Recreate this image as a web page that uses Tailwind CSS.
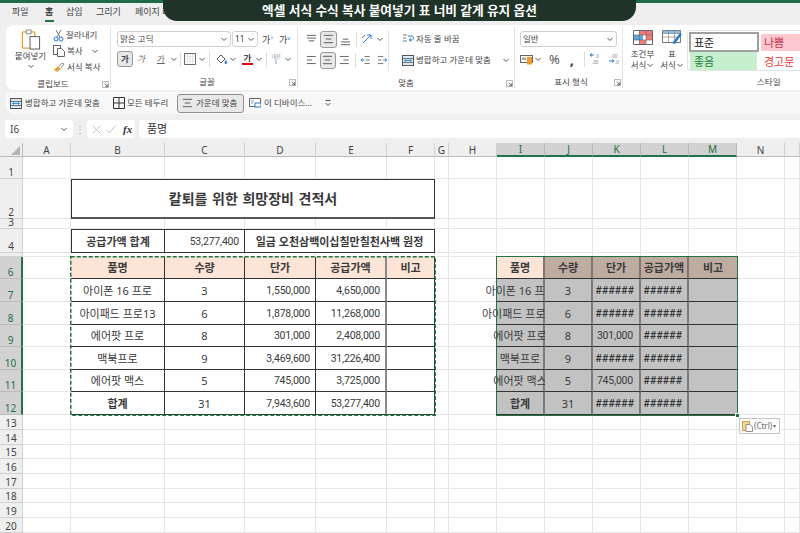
<!DOCTYPE html>
<html lang="ko">
<head>
<meta charset="UTF-8">
<title>엑셀 서식 수식 복사</title>
<script src="https://cdn.jsdelivr.net/npm/@tailwindcss/browser@4"></script>
</head>
<body class="w-[800px] h-[533px] overflow-hidden bg-[#efefef] text-[#444] text-[8.5px] [font-family:'Noto_Sans','Noto_Sans_CJK_KR',sans-serif]">

<!-- shared icons -->
<svg class="hidden">
  <symbol id="chev" viewBox="0 0 8 8"><path d="M1.500 3 4 5.500 6.500 3" fill="none" stroke="#555" stroke-width="1"/></symbol>
  <symbol id="launch" viewBox="0 0 8 8"><path d="M.5.500h7v7h-7z" fill="none" stroke="#999" stroke-width=".8"/><path d="M3 3l3.500 3.500M6.500 3.500v3h-3" fill="none" stroke="#555" stroke-width=".9"/></symbol>
  <symbol id="merge" viewBox="0 0 12 11"><rect x=".5" y=".5" width="11" height="10" fill="#d7ebf8" stroke="#555"/><path d="M.5 3.500h11M.5 7.500h11" stroke="#555" stroke-width=".8"/><path d="M2.500 5.500h7M2.500 5.500l1.500-1M2.500 5.500l1.500 1M9.500 5.500l-1.500-1M9.500 5.500l-1.500 1" stroke="#1e7fc9" stroke-width=".8" fill="none"/></symbol>
  <symbol id="center" viewBox="0 0 12 10"><path d="M1 1h10M3 5h6M1 9h10" stroke="#555" stroke-width="1"/></symbol>
</svg>

<!-- title bar -->
<header class="relative h-[25px] border-t-[3px] border-[#1f6b46]">
  <nav class="flex items-center h-[18px] text-[9px] text-[#444] whitespace-nowrap">
    <span class="ml-[12px] w-[33px]">파일</span>
    <span class="w-[21px] font-bold relative">홈<i class="absolute left-0 top-[15px] w-[9px] h-[2px] bg-[#217346]"></i></span>
    <span class="w-[30px]">삽입</span>
    <span class="w-[39px]">그리기</span>
    <span>페이지 레이아웃</span>
  </nav>
  <div class="absolute left-[163px] -top-[3px] w-[473px] h-[21px] bg-[#1f3328] rounded-b-[14px] flex items-center justify-center text-white font-bold text-[12.7px] leading-none">엑셀 서식 수식 복사 붙여넣기 표 너비 같게 유지 옵션</div>
</header>

<!-- ribbon -->
<section class="ml-[6px] h-[65px] bg-white rounded-l-lg flex">

  <!-- clipboard -->
  <div class="w-[105px] shrink-0 border-r border-[#e3e3e3] my-[2px] flex flex-col">
    <div class="flex h-[48px]">
      <div class="w-[47px] shrink-0 flex flex-col items-center pt-[2px] pl-[2px]">
        <svg class="w-[20px] h-[21px]" viewBox="0 0 20 22"><rect x="1" y="3" width="13" height="17" rx="1" fill="#fff" stroke="#e8a33d" stroke-width="1.400"/><rect x="5" y="1" width="5" height="4" fill="#fff" stroke="#888"/><rect x="9" y="8" width="10" height="13" fill="#fff" stroke="#555"/></svg>
        <span class="leading-[12px] whitespace-nowrap">붙여넣기</span>
        <svg class="w-[8px] h-[8px]"><use href="#chev"/></svg>
      </div>
      <div class="flex flex-col text-[#444] leading-none">
        <div class="h-[17px] flex items-center gap-[2px]">
          <svg class="w-[11px] h-[13px]" viewBox="0 0 11 13"><path d="M3 1l4 7M8 1 4 8" stroke="#777" stroke-width="1" fill="none"/><circle cx="3" cy="10" r="2" fill="none" stroke="#2b7cd3"/><circle cx="8" cy="10" r="2" fill="none" stroke="#2b7cd3"/></svg>
          <span>잘라내기</span>
        </div>
        <div class="h-[17px] flex items-center gap-[2px]">
          <svg class="w-[12px] h-[12px]" viewBox="0 0 12 12"><rect x=".5" y=".5" width="7" height="9" fill="#fff" stroke="#666"/><path d="M4.500 3.500h4l3 3v5h-7z" fill="#fff" stroke="#666"/></svg>
          <span class="w-[22px]">복사</span>
          <svg class="w-[8px] h-[8px]"><use href="#chev"/></svg>
        </div>
        <div class="h-[17px] flex items-center gap-[2px]">
          <svg class="w-[12px] h-[12px]" viewBox="0 0 12 12"><path d="M1 9l4-4 3 3-4 3z" fill="#e8a33d"/><path d="M6 5l3-3 2 1-3 4" fill="#fff" stroke="#777" stroke-width=".8"/></svg>
          <span>서식 복사</span>
        </div>
      </div>
    </div>
    <div class="flex items-center justify-center relative h-[12px] pr-[10px] mt-[3px]">클립보드<svg class="absolute right-[1px] top-[3px] w-[7px] h-[7px]"><use href="#launch"/></svg></div>
  </div>

  <!-- font -->
  <div class="w-[187px] shrink-0 border-r border-[#e3e3e3] my-[2px] flex flex-col pl-[6px]">
    <div class="flex items-center h-[19px] mt-[3px]">
      <div class="w-[114px] h-[16px] border border-[#d0d0d0] rounded-[3px] flex items-center justify-between px-[2px]"><span>맑은 고딕</span><svg class="w-[8px] h-[8px]"><use href="#chev"/></svg></div>
      <div class="ml-[1px] w-[26px] h-[16px] border border-[#d0d0d0] rounded-[3px] flex items-center justify-between px-[2px]"><span>11</span><svg class="w-[8px] h-[8px]"><use href="#chev"/></svg></div>
      <span class="ml-[4px] w-[17px] text-[9px] leading-none whitespace-nowrap">가<span class="text-[#2b7cd3] text-[6px] align-top">^</span></span>
      <span class="text-[9px] leading-none whitespace-nowrap">가<span class="text-[#2b7cd3] text-[6px] align-top">v</span></span>
    </div>
    <div class="flex items-center h-[18px] mt-[2px]">
      <div class="w-[16px] h-[16px] bg-[#e8e8e8] border border-[#999] rounded-[3px] flex items-center justify-center font-bold">가</div>
      <span class="ml-[4px] w-[20px] italic text-[#666]">가</span>
      <span class="w-[13px] underline text-[#666]">가</span>
      <svg class="w-[8px] h-[8px]"><use href="#chev"/></svg>
      <i class="ml-[2px] w-px h-[15px] bg-[#ddd]"></i>
      <svg class="ml-[3px] w-[12px] h-[12px]" viewBox="0 0 12 12"><path d="M.5.500h11v11H.5z" fill="none" stroke="#666"/><path d="M6 .5v11M.5 6h11M3.500.5v11M8.500.5v11M.5 3.500h11M.5 8.500h11" stroke="#aaa" stroke-width=".5" stroke-dasharray="1 1"/></svg>
      <svg class="ml-[2px] w-[8px] h-[8px]"><use href="#chev"/></svg>
      <i class="ml-[3px] w-px h-[15px] bg-[#ddd]"></i>
      <svg class="ml-[6px] w-[12px] h-[12px]" viewBox="0 0 12 12"><path d="M1 6l4-4 4 4-4 4z" fill="#fff" stroke="#555"/><path d="M9.500 7c1 1.300 1.500 2 1.500 2.700a1.200 1.200 0 0 1-2.400 0c0-.7.4-1.400.9-2.700z" fill="#2b7cd3"/></svg>
      <svg class="ml-[1px] w-[8px] h-[8px]"><use href="#chev"/></svg>
      <div class="ml-[5px] w-[11px] flex flex-col items-center leading-[10px] font-bold"><span>가</span><i class="w-[11px] h-[2px] bg-[#e60012]"></i></div>
      <svg class="ml-[2px] w-[8px] h-[8px]"><use href="#chev"/></svg>
      <i class="ml-[3px] w-px h-[15px] bg-[#ddd]"></i>
      <div class="ml-[3px] w-[12px] flex flex-col items-center leading-[6px] text-[5px] text-[#888] whitespace-nowrap"><span>내천</span><span class="text-[#2b7cd3] text-[7px]">i</span></div>
      <svg class="ml-[2px] w-[8px] h-[8px]"><use href="#chev"/></svg>
    </div>
    <div class="flex items-center justify-center relative h-[12px] mt-[8px]">글꼴<svg class="absolute right-[1px] top-[3px] w-[7px] h-[7px]"><use href="#launch"/></svg></div>
  </div>

  <!-- alignment -->
  <div class="w-[217px] shrink-0 border-r border-[#e3e3e3] my-[2px] flex flex-col">
    <div class="flex h-[48px]">
      <div class="w-[91px] shrink-0 pl-[8px] border-r border-[#e3e3e3] my-[3px] h-[41px]">
        <div class="flex items-center h-[18px] gap-[3px]">
          <svg class="w-[11px] h-[10px]" viewBox="0 0 12 10"><path d="M1 1h10M1 4h10M3 7h6" stroke="#555"/></svg>
          <div class="w-[17px] h-[17px] bg-[#e8e8e8] border border-[#999] rounded-[3px] flex items-center justify-center"><svg class="w-[11px] h-[10px]"><use href="#center"/></svg></div>
          <svg class="w-[11px] h-[10px] mt-[3px]" viewBox="0 0 12 10"><path d="M3 3h6M1 6h10M1 9h10" stroke="#555"/></svg>
          <i class="ml-[2px] w-px h-[15px] bg-[#ddd]"></i>
          <svg class="ml-[1px] w-[12px] h-[12px]" viewBox="0 0 12 12"><path d="M2 10 10 2M6 2h4v4" fill="none" stroke="#2b7cd3"/><path d="M1 5l3-3" stroke="#777"/></svg>
          <svg class="w-[8px] h-[8px]"><use href="#chev"/></svg>
        </div>
        <div class="flex items-center h-[18px] gap-[3px] mt-[3px]">
          <svg class="w-[11px] h-[10px]" viewBox="0 0 12 10"><path d="M1 1h10M1 5h6M1 9h10" stroke="#555"/></svg>
          <div class="w-[17px] h-[17px] bg-[#e8e8e8] border border-[#999] rounded-[3px] flex items-center justify-center"><svg class="w-[11px] h-[10px]"><use href="#center"/></svg></div>
          <svg class="w-[11px] h-[10px]" viewBox="0 0 12 10"><path d="M1 1h10M5 5h6M1 9h10" stroke="#555"/></svg>
          <i class="ml-[2px] w-px h-[15px] bg-[#ddd]"></i>
          <svg class="ml-[1px] w-[11px] h-[10px]" viewBox="0 0 12 10"><path d="M5 1h6M7 5h4M5 9h6" stroke="#666"/><path d="M5 5H1M1 5l2-2M1 5l2 2" stroke="#2b7cd3" fill="none"/></svg>
          <svg class="ml-[4px] w-[11px] h-[10px]" viewBox="0 0 12 10"><path d="M1 1h6M1 5h4M1 9h6" stroke="#666"/><path d="M7 5h4M11 5 9 3M11 5 9 7" stroke="#2b7cd3" fill="none"/></svg>
        </div>
      </div>
      <div class="pl-[13px] pt-[3px] leading-none">
        <div class="flex items-center h-[18px] gap-[2px]">
          <svg class="w-[12px] h-[12px]" viewBox="0 0 12 12"><path d="M1 2h4M1 5h3M1 8h4" stroke="#777"/><path d="M6 3h4c2 0 2 4 0 4H7M7 7l2-1.500M7 7l2 1.500" stroke="#2b7cd3" fill="none"/></svg>
          <span>자동 줄 바꿈</span>
        </div>
        <div class="flex items-center h-[18px] gap-[2px] mt-[3px]">
          <svg class="w-[12px] h-[11px]"><use href="#merge"/></svg>
          <span class="w-[84px] whitespace-nowrap">병합하고 가운데 맞춤</span>
          <svg class="w-[8px] h-[8px]"><use href="#chev"/></svg>
        </div>
      </div>
    </div>
    <div class="flex items-center justify-center relative h-[12px] mt-[3px]">맞춤<svg class="absolute right-[1px] top-[3px] w-[7px] h-[7px]"><use href="#launch"/></svg></div>
  </div>

  <!-- number -->
  <div class="w-[108px] shrink-0 border-r border-[#e3e3e3] my-[2px] flex flex-col pl-[5px]">
    <div class="flex items-center h-[19px] mt-[3px]">
      <div class="w-[97px] h-[16px] border border-[#d0d0d0] rounded-[3px] flex items-center justify-between px-[2px]"><span>일반</span><svg class="w-[8px] h-[8px]"><use href="#chev"/></svg></div>
    </div>
    <div class="flex items-center h-[18px] mt-[2px]">
      <svg class="w-[13px] h-[12px]" viewBox="0 0 13 12"><rect x=".5" y="2.500" width="12" height="7" fill="#fff" stroke="#666"/><path d="M3 4v3M5 4v3M1.500 6h5" stroke="#666" stroke-width=".7"/><rect x="7" y="4" width="5" height="7.500" fill="#f09a2c"/></svg>
      <svg class="ml-[1px] w-[8px] h-[8px]"><use href="#chev"/></svg>
      <span class="ml-[7px] text-[13px] text-[#555] leading-none">%</span>
      <span class="ml-[10px] w-[6px] text-[15px] font-bold text-[#444] leading-none">,</span>
      <i class="ml-[8px] w-px h-[15px] bg-[#ddd]"></i>
      <svg class="ml-[4px] w-[12px] h-[12px]" viewBox="0 0 12 12"><path d="M5 2H1M1 2l2-1.500M1 2l2 1.500" stroke="#2b7cd3" fill="none"/><text x="6" y="5" font-size="4.500" fill="#777">.0</text><text x="3" y="11" font-size="4.500" fill="#777">.00</text></svg>
      <svg class="ml-[7px] w-[12px] h-[12px]" viewBox="0 0 12 12"><text x="3" y="5" font-size="4.500" fill="#777">.00</text><path d="M1 8h5M6 8 4 6.500M6 8 4 9.500" stroke="#2b7cd3" fill="none"/><text x="7" y="11" font-size="4.500" fill="#777">.0</text></svg>
    </div>
    <div class="flex items-center justify-center relative h-[12px] mt-[8px]">표시 형식<svg class="absolute right-[1px] top-[3px] w-[7px] h-[7px]"><use href="#launch"/></svg></div>
  </div>

  <!-- styles -->
  <div class="flex-1 min-w-0 my-[2px] flex flex-col">
    <div class="flex h-[48px]">
      <div class="w-[33px] shrink-0 ml-[3px] flex flex-col items-center pt-[3px] leading-[11px] whitespace-nowrap">
        <svg class="w-[20px] h-[15px] mb-[3px]" viewBox="0 0 20 15"><path d="M.5.500h19v14H.5z" fill="#fff" stroke="#666"/><rect x="6" y="1" width="13" height="4" fill="#f47a7a"/><rect x="1" y="5" width="9" height="5" fill="#5ba7e0"/><rect x="13" y="5" width="6" height="5" fill="#f47a7a"/><rect x="6" y="10" width="7" height="4" fill="#f47a7a"/><path d="M6.500 0v15M13 0v15M0 5h20M0 10h20" stroke="#666" stroke-width=".6"/></svg>
        <span>조건부</span>
        <span class="flex items-center">서식<svg class="w-[8px] h-[8px]"><use href="#chev"/></svg></span>
      </div>
      <div class="w-[26px] shrink-0 flex flex-col items-center pt-[2px] leading-[11px] whitespace-nowrap">
        <svg class="w-[21px] h-[16px] mb-[3px]" viewBox="0 0 21 16"><path d="M.5 1.500h18v12H.5z" fill="#fff" stroke="#777"/><path d="M.5 1.500h18v3H.5z" fill="#8fbde6" stroke="#777" stroke-width=".6"/><path d="M6.500 1v13M12.500 1v13M0 8h19" stroke="#777" stroke-width=".6"/><path d="M10 14 18 4l2 1-7 10z" fill="#2b7cd3"/></svg>
        <span>표</span>
        <span class="flex items-center">서식<svg class="w-[8px] h-[8px]"><use href="#chev"/></svg></span>
      </div>
      <div class="ml-[2px] mt-[3px] flex-1 min-w-0 h-[41px] border-y border-l border-[#e3e3e3] rounded-l-[3px] grid grid-cols-[73px_1fr] grid-rows-[21px_18px] text-[11px] leading-none">
        <div class="ml-[1px] mt-[1px] w-[70px] border-2 border-[#a0a0a0] bg-white flex items-center pl-[3px] text-[#222]">표준</div>
        <div class="mt-[3px] mb-[1px] bg-[#ffc7ce] flex items-center pl-[3px] text-[#c0304a]">나쁨</div>
        <div class="ml-[2px] w-[67px] bg-[#c6efce] flex items-center pl-[4px] text-[#1e7a3a]">좋음</div>
        <div class="flex items-center pl-[3px] text-[#f03a3a]">경고문</div>
      </div>
    </div>
    <div class="h-[12px] mt-[3px] pl-[134px] flex items-center">스타일</div>
  </div>
</section>

<!-- quick access row -->
<section class="ml-[6px] mt-[2px] h-[22px] bg-[#f8f8f8] rounded-bl-lg flex items-center text-[8.5px]">
  <svg class="ml-[4px] w-[12px] h-[11px]"><use href="#merge"/></svg>
  <span class="ml-[3px] w-[88px] whitespace-nowrap">병합하고 가운데 맞춤</span>
  <svg class="w-[12px] h-[12px]" viewBox="0 0 12 12"><path d="M.5.500h11v11H.5zM6 .5v11M.5 6h11" fill="none" stroke="#333"/></svg>
  <span class="ml-[2px] w-[50px]">모든 테두리</span>
  <div class="w-[67px] h-[19px] bg-[#e8e8e8] border border-[#8f8f8f] rounded-[3px] flex items-center pl-[4px] gap-[3px]"><svg class="w-[11px] h-[10px]"><use href="#center"/></svg><span>가운데 맞춤</span></div>
  <svg class="ml-[5px] w-[12px] h-[11px]" viewBox="0 0 12 11"><path d="M.5.500h11v8H.5z" fill="#fff" stroke="#666"/><path d="M2 3h3M2 5h2" stroke="#999"/><rect x="6" y="5" width="6" height="4" fill="#fff" stroke="#2b7cd3"/></svg>
  <span class="ml-[3px] w-[60px] whitespace-nowrap">이 디바이스...</span>
  <svg class="w-[8px] h-[8px]" viewBox="0 0 8 8"><path d="M1.500 1.500h5M1.500 4 4 6.500 6.500 4" fill="none" stroke="#555"/></svg>
</section>

<!-- formula bar -->
<section class="mt-[6px] h-[18px] flex items-stretch text-[10px]">
  <div class="ml-[5px] w-[68px] bg-white rounded-[3px] flex items-center justify-between px-[5px]"><span>I6</span><svg class="w-[8px] h-[8px]"><use href="#chev"/></svg></div>
  <div class="w-[14px] flex items-center justify-center text-[#999] leading-none">⋮</div>
  <div class="w-[48px] bg-white rounded-[3px] flex items-center pl-[5px] gap-[5px]">
    <svg class="w-[9px] h-[9px]" viewBox="0 0 9 9"><path d="M.5.500l8 8M8.500.500l-8 8" stroke="#c4c4c4"/></svg>
    <svg class="w-[10px] h-[9px]" viewBox="0 0 10 9"><path d="M.5 5l3 3 6-7.500" fill="none" stroke="#c4c4c4"/></svg>
    <span class="ml-[2px] [font-family:'Liberation_Serif',serif] italic font-bold text-[11px] text-[#333] leading-none">fx</span>
  </div>
  <div class="ml-[4px] flex-1 bg-white rounded-l-[3px] flex items-center pl-[8px] text-[11px] text-[#333]">품명</div>
</section>

<!-- sheet -->
<main id="sheet" class="relative mt-[5px] w-[800px] grid grid-cols-[23px_48px_94px_80px_71px_71px_48px_14px_48px_48px_48px_48px_48px_48px_48px_15px] grid-rows-[14px_22px_40px_10px_24px_4px_22px_23px_23px_22px_23px_22px_23px_15px_15px_14px_15px_15px_14px_15px_15px] bg-white text-[11px] text-[#3a3a3a]">
  <!-- copy marquee and paste selection sit over the cells -->
  <svg class="absolute z-10 left-[70px] top-[113px] pointer-events-none" width="366" height="160"><rect x=".75" y=".75" width="364.500" height="158.500" fill="none" stroke="#217346" stroke-width="1.500" stroke-dasharray="4 2"/></svg>
  <div class="absolute z-10 left-[496px] top-[113px] w-[242px] h-[160px] border-[1.5px] border-[#217346] pointer-events-none"></div>
  <i class="absolute z-20 left-[735px] top-[270px] w-[5px] h-[5px] bg-[#217346] border border-white"></i>
  <div class="absolute z-20 left-[739px] top-[275px] w-[41px] h-[16px] bg-white border border-[#c4c4c4] flex items-center pl-[2px] gap-[1px] text-[8px] text-[#666]">
    <svg class="w-[11px] h-[12px]" viewBox="0 0 11 12"><rect x=".5" y="1.500" width="7" height="9" fill="#f3d69a" stroke="#c9a24f"/><path d="M4 4.500h4l2.500 2.500v4.500H4z" fill="#fff" stroke="#777" stroke-width=".8"/></svg>
    <span>(Ctrl)</span><span class="text-[6px]">▾</span>
  </div>
</main>

<script>
  var letters = ['', 'A','B','C','D','E','F','G','H','I','J','K','L','M','N',''];
  var selCols = 'IJKLM', selRows = [6,7,8,9,10,11,12];
  var grid = 'border-r border-b border-[#e6e6e6]';
  var line = 'border-r border-b border-[#333]';
  var heavy = 'border-r-2 border-r-[#8a8a8a] border-b border-b-[#333]';
  var num = '[font-family:Roboto] text-[10.5px] tracking-[-0.2px] justify-end pt-[2px] pr-[5px]';
  var hash = ' tracking-[0px] pr-[3px] text-[9.5px] text-[#222]';
  var peach = 'bg-[#fce4d6] font-bold';
  var cells = {}, covered = {};

  function put(id, text, cls) { cells[id] = [text, cls]; }

  // title and total rows
  put('B2', '칼퇴를 위한 희망장비 견적서', 'col-span-5 border border-[#333] border-b-2 border-b-[#555] font-bold text-[14px] [word-spacing:1px]');
  'CDEF'.split('').forEach(function (c) { covered[c + 2] = 1; });
  covered.E4 = covered.F4 = 1;
  put('B4', '공급가액 합계', line + ' border-l border-t font-bold');
  put('C4', '53,277,400', line + ' border-t ' + num);
  put('D4', '일금 오천삼백이십칠만칠천사백 원정', 'col-span-3 border border-l-0 border-[#333] font-bold');

  // source table
  var items = [
    ['아이폰 16 프로', '3', '1,550,000', '4,650,000', '######', '######'],
    ['아이패드 프로13', '6', '1,878,000', '11,268,000', '######', '######'],
    ['에어팟 프로', '8', '301,000', '2,408,000', '301,000', '######'],
    ['맥북프로', '9', '3,469,600', '31,226,400', '######', '######'],
    ['에어팟 맥스', '5', '745,000', '3,725,000', '745,000', '######'],
    ['합계', '31', '7,943,600', '53,277,400', '######', '######']
  ];
  ['품명','수량','단가','공급가액','비고'].forEach(function (h, i) {
    put('BCDEF'[i] + 6, h, peach + ' ' + (i == 3 ? heavy : line));
    var tint = i == 0 ? 'bg-[#fce4d6]' : 'bg-[#bfaca1]';
    put('IJKLM'[i] + 6, h, tint + ' font-bold ' + (i < 4 ? 'border-r-2 border-r-[#7f7470] border-b border-b-[#333]' : 'border-b border-[#333]'));
  });
  var selLine = 'bg-[#c2c2c2] border-r-2 border-r-[#7a7a7a] border-b border-b-[#333]';
  items.forEach(function (it, n) {
    var r = 7 + n, b = n == 5 ? ' font-bold' : '';
    put('B' + r, it[0], line + b);
    put('C' + r, it[1], line);
    put('D' + r, it[2], line + ' ' + num);
    put('E' + r, it[3], heavy + ' ' + num);
    put('F' + r, '', line);
    put('I' + r, it[0], selLine + b + ' [clip-path:inset(0_0_0_-40px)]');
    put('J' + r, it[1], selLine);
    put('K' + r, it[4], selLine + ' ' + num + (it[4] == '######' ? hash : ' pr-[6px]'));
    put('L' + r, it[5], selLine + ' ' + num + hash);
    put('M' + r, '', 'bg-[#c2c2c2] border-b border-b-[#333]');
  });

  var sheet = document.getElementById('sheet');
  function add(text, cls) {
    var d = document.createElement('div');
    d.className = 'flex items-center justify-center whitespace-nowrap min-w-0 leading-none ' + cls;
    d.textContent = text;
    sheet.appendChild(d);
  }

  // column header row
  letters.forEach(function (l, c) {
    var on = l && selCols.indexOf(l) > -1;
    if (c == 0) {
      add('', 'bg-[#efefef] border-r border-b border-[#bbb]');
      sheet.lastChild.innerHTML = '<svg class="ml-auto mr-[2px] mt-auto mb-[1px] w-[9px] h-[9px]" viewBox="0 0 9 9"><path d="M9 0v9H0z" fill="#b5b5b5"/></svg>';
      return;
    }
    add(l, 'text-[10px] border-b ' + (on ? 'bg-[#d2d2d2] text-[#1f6b46] border-b-2 border-b-[#217346] border-r border-r-[#bbb]' : 'bg-[#efefef] text-[#444] border-b-[#bbb] border-r border-r-[#d0d0d0]'));
  });

  // rows 1-20, row 5 is squeezed down to a sliver and has no visible label
  for (var r = 1; r <= 20; r++) {
    var on = selRows.indexOf(r) > -1;
    add(r == 5 ? '' : r, 'items-end pb-[1px] text-[10px] ' + (on ? 'bg-[#d2d2d2] text-[#1f6b46] border-r-2 border-r-[#217346] border-b border-b-[#bbb]' : 'bg-[#efefef] text-[#444] border-r border-b border-[#d0d0d0]'));
    for (var c = 1; c < letters.length; c++) {
      var id = (letters[c] || 'O') + r;
      if (covered[id]) continue;
      var cell = cells[id];
      if (cell) add(cell[0], cell[1]);
      else add('', grid);
    }
  }
</script>
</body>
</html>
